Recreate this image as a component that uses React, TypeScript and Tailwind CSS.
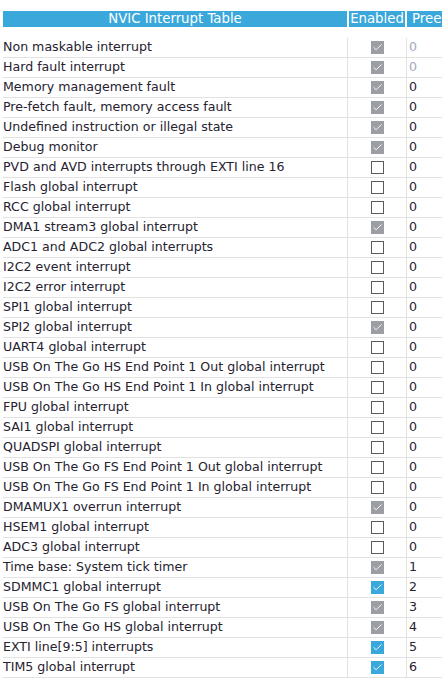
import { Check } from 'lucide-react'

type State = 'off' | 'locked' | 'on'

type Row = { name: string; state: State; prio: string; dim?: boolean }

const ROWS: Row[] = [
  { name: 'Non maskable interrupt', state: 'locked', prio: '0', dim: true },
  { name: 'Hard fault interrupt', state: 'locked', prio: '0', dim: true },
  { name: 'Memory management fault', state: 'locked', prio: '0' },
  { name: 'Pre-fetch fault, memory access fault', state: 'locked', prio: '0' },
  { name: 'Undefined instruction or illegal state', state: 'locked', prio: '0' },
  { name: 'Debug monitor', state: 'locked', prio: '0' },
  { name: 'PVD and AVD interrupts through EXTI line 16', state: 'off', prio: '0' },
  { name: 'Flash global interrupt', state: 'off', prio: '0' },
  { name: 'RCC global interrupt', state: 'off', prio: '0' },
  { name: 'DMA1 stream3 global interrupt', state: 'locked', prio: '0' },
  { name: 'ADC1 and ADC2 global interrupts', state: 'off', prio: '0' },
  { name: 'I2C2 event interrupt', state: 'off', prio: '0' },
  { name: 'I2C2 error interrupt', state: 'off', prio: '0' },
  { name: 'SPI1 global interrupt', state: 'off', prio: '0' },
  { name: 'SPI2 global interrupt', state: 'locked', prio: '0' },
  { name: 'UART4 global interrupt', state: 'off', prio: '0' },
  { name: 'USB On The Go HS End Point 1 Out global interrupt', state: 'off', prio: '0' },
  { name: 'USB On The Go HS End Point 1 In global interrupt', state: 'off', prio: '0' },
  { name: 'FPU global interrupt', state: 'off', prio: '0' },
  { name: 'SAI1 global interrupt', state: 'off', prio: '0' },
  { name: 'QUADSPI global interrupt', state: 'off', prio: '0' },
  { name: 'USB On The Go FS End Point 1 Out global interrupt', state: 'off', prio: '0' },
  { name: 'USB On The Go FS End Point 1 In global interrupt', state: 'off', prio: '0' },
  { name: 'DMAMUX1 overrun interrupt', state: 'locked', prio: '0' },
  { name: 'HSEM1 global interrupt', state: 'off', prio: '0' },
  { name: 'ADC3 global interrupt', state: 'off', prio: '0' },
  { name: 'Time base: System tick timer', state: 'locked', prio: '1' },
  { name: 'SDMMC1 global interrupt', state: 'on', prio: '2' },
  { name: 'USB On The Go FS global interrupt', state: 'locked', prio: '3' },
  { name: 'USB On The Go HS global interrupt', state: 'locked', prio: '4' },
  { name: 'EXTI line[9:5] interrupts', state: 'on', prio: '5' },
  { name: 'TIM5 global interrupt', state: 'on', prio: '6' },
]

function Box({ state }: { state: State }) {
  if (state === 'off') {
    return <span className="block h-[13px] w-[13px] border border-[#5a5a5a] bg-white" />
  }
  return (
    <span
      className={`flex h-[13px] w-[13px] items-center justify-center ${
        state === 'on' ? 'bg-[#3ba8dc]' : 'bg-[#9b9fa4]'
      }`}
    >
      <Check size={11} strokeWidth={2} className="text-white" />
    </span>
  )
}

export default function App() {
  return (
    <div className="h-[694px] w-[442px] overflow-hidden bg-white pl-[3px] pt-[11px] font-['DejaVu_Sans',sans-serif] text-[12.6px] text-[#262230]">
      <div className="w-[460px]">
        {/* header */}
        <div className="flex h-[16px] gap-[2px] whitespace-nowrap text-[13.3px] text-white">
          <div className="flex w-[344px] items-center justify-center bg-[#3ba8dc]">NVIC Interrupt Table</div>
          <div className="flex w-[56px] items-center justify-center bg-[#3ba8dc]">Enabled</div>
          <div className="flex flex-1 items-center overflow-hidden bg-[#3ba8dc] pl-[5px]">Preemption Priority</div>
        </div>

        <div className="mt-[11px]">
          {ROWS.map((r) => (
            <div key={r.name} className="flex h-[20px] border-b border-[#e2e2e2]">
              <div className="flex w-[345px] items-center border-r border-[#e2e2e2] whitespace-nowrap">
                {r.name}
              </div>
              <div className="flex w-[59px] items-center justify-center border-r border-[#e2e2e2]">
                <Box state={r.state} />
              </div>
              <div className={`flex flex-1 items-center pl-[2px] ${r.dim ? 'text-[#a0abbd]' : ''}`}>
                {r.prio}
              </div>
            </div>
          ))}
        </div>
      </div>
    </div>
  )
}
